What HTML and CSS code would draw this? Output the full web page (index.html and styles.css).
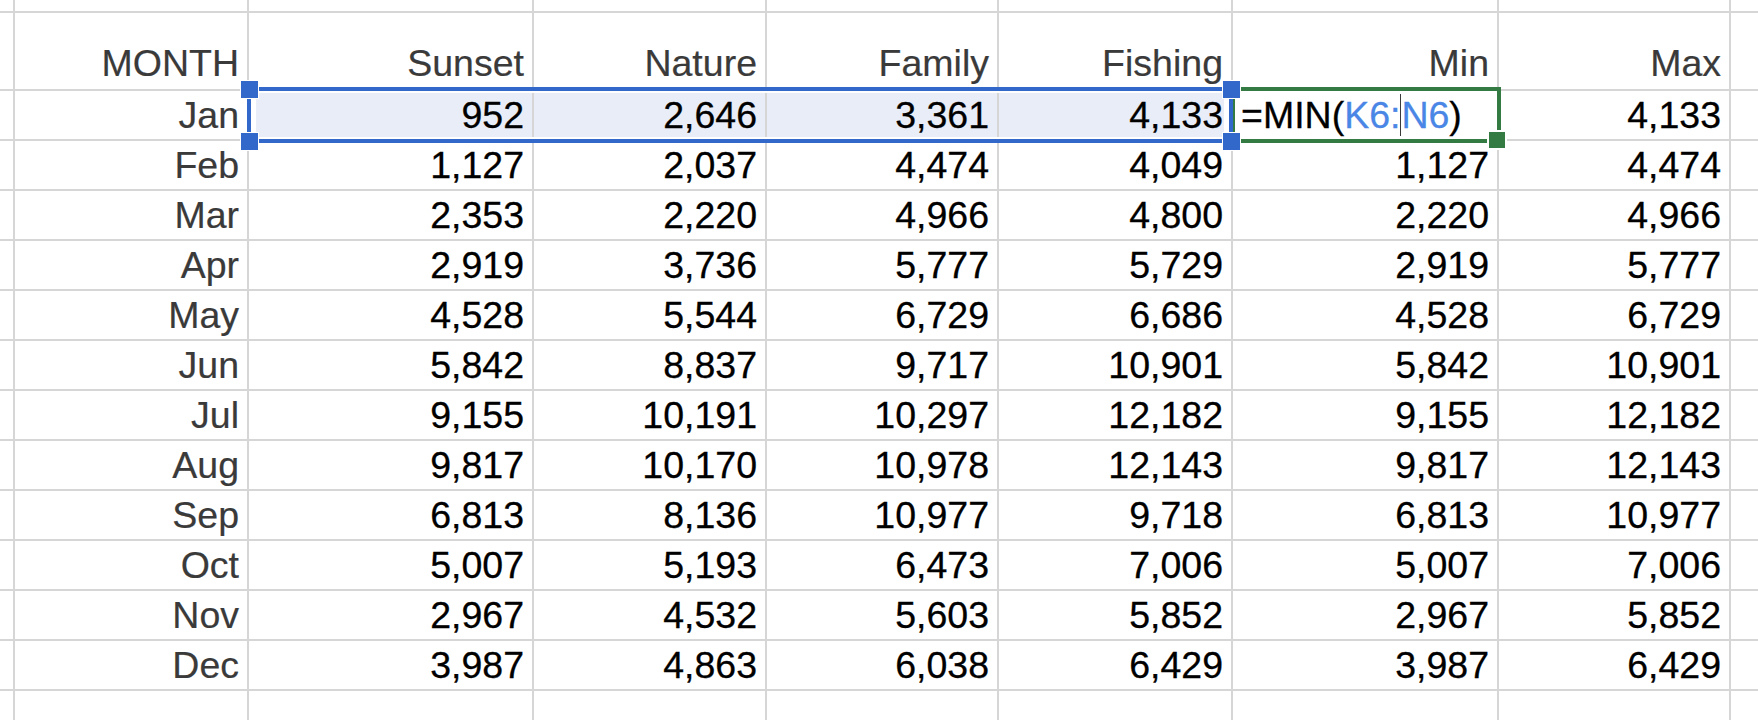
FILE: index.html
```html
<!DOCTYPE html>
<html lang="en">
<head>
<meta charset="utf-8">
<title>Sheet</title>
<link rel="stylesheet" href="styles.css">
</head>
<body>
<div class="sheet">
  <div class="row"><div class="c"></div><div class="c"></div><div class="c"></div><div class="c"></div><div class="c"></div><div class="c"></div><div class="c"></div><div class="c"></div><div class="c"></div></div>
  <div class="row head"><div class="c"></div><div class="c t">MONTH</div><div class="c t">Sunset</div><div class="c t">Nature</div><div class="c t">Family</div><div class="c t">Fishing</div><div class="c t">Min</div><div class="c t">Max</div><div class="c"></div></div>
  <div class="row active">
    <div class="c"></div><div class="c t">Jan</div><div class="c n hl">952</div><div class="c n hl">2,646</div><div class="c n hl">3,361</div><div class="c n hl">4,133</div><div class="c edit">=MIN(<span class="ref">K6:<i class="caret"></i>N6</span>)</div><div class="c n">4,133</div><div class="c"></div>
    <div class="editor"><span class="fill-handle"></span></div>
    <div class="range"><span class="hd tl"></span><span class="hd tr"></span><span class="hd bl"></span><span class="hd br"></span></div>
  </div>
  <div class="row"><div class="c"></div><div class="c t">Feb</div><div class="c n">1,127</div><div class="c n">2,037</div><div class="c n">4,474</div><div class="c n">4,049</div><div class="c n">1,127</div><div class="c n">4,474</div><div class="c"></div></div>
  <div class="row"><div class="c"></div><div class="c t">Mar</div><div class="c n">2,353</div><div class="c n">2,220</div><div class="c n">4,966</div><div class="c n">4,800</div><div class="c n">2,220</div><div class="c n">4,966</div><div class="c"></div></div>
  <div class="row"><div class="c"></div><div class="c t">Apr</div><div class="c n">2,919</div><div class="c n">3,736</div><div class="c n">5,777</div><div class="c n">5,729</div><div class="c n">2,919</div><div class="c n">5,777</div><div class="c"></div></div>
  <div class="row"><div class="c"></div><div class="c t">May</div><div class="c n">4,528</div><div class="c n">5,544</div><div class="c n">6,729</div><div class="c n">6,686</div><div class="c n">4,528</div><div class="c n">6,729</div><div class="c"></div></div>
  <div class="row"><div class="c"></div><div class="c t">Jun</div><div class="c n">5,842</div><div class="c n">8,837</div><div class="c n">9,717</div><div class="c n">10,901</div><div class="c n">5,842</div><div class="c n">10,901</div><div class="c"></div></div>
  <div class="row"><div class="c"></div><div class="c t">Jul</div><div class="c n">9,155</div><div class="c n">10,191</div><div class="c n">10,297</div><div class="c n">12,182</div><div class="c n">9,155</div><div class="c n">12,182</div><div class="c"></div></div>
  <div class="row"><div class="c"></div><div class="c t">Aug</div><div class="c n">9,817</div><div class="c n">10,170</div><div class="c n">10,978</div><div class="c n">12,143</div><div class="c n">9,817</div><div class="c n">12,143</div><div class="c"></div></div>
  <div class="row"><div class="c"></div><div class="c t">Sep</div><div class="c n">6,813</div><div class="c n">8,136</div><div class="c n">10,977</div><div class="c n">9,718</div><div class="c n">6,813</div><div class="c n">10,977</div><div class="c"></div></div>
  <div class="row"><div class="c"></div><div class="c t">Oct</div><div class="c n">5,007</div><div class="c n">5,193</div><div class="c n">6,473</div><div class="c n">7,006</div><div class="c n">5,007</div><div class="c n">7,006</div><div class="c"></div></div>
  <div class="row"><div class="c"></div><div class="c t">Nov</div><div class="c n">2,967</div><div class="c n">4,532</div><div class="c n">5,603</div><div class="c n">5,852</div><div class="c n">2,967</div><div class="c n">5,852</div><div class="c"></div></div>
  <div class="row"><div class="c"></div><div class="c t">Dec</div><div class="c n">3,987</div><div class="c n">4,863</div><div class="c n">6,038</div><div class="c n">6,429</div><div class="c n">3,987</div><div class="c n">6,429</div><div class="c"></div></div>
  <div class="row"><div class="c"></div><div class="c"></div><div class="c"></div><div class="c"></div><div class="c"></div><div class="c"></div><div class="c"></div><div class="c"></div><div class="c"></div></div>
</div>
</body>
</html>
```

FILE: styles.css
```css
* {
  box-sizing: border-box;
  margin: 0;
  padding: 0;
}

html, body {
  background: #ffffff;
  overflow: hidden;
}

body {
  width: 1758px;
  height: 720px;
  font-family: "Liberation Sans", Arial, sans-serif;
  font-size: 37.5px;
}

.sheet {
  display: grid;
  grid-template-rows: 11px 76px repeat(13, 48px);
  row-gap: 2px;
  background: #d6d6d6;
  height: 720px;
  overflow: hidden;
}

.row {
  display: grid;
  grid-template-columns: 13px 232px 283px 231px 230px 232px 264px 230px 1fr;
  column-gap: 2px;
  position: relative;
}

.active {
  z-index: 1;
}

.c {
  background: #ffffff;
  display: flex;
  align-items: flex-end;
  justify-content: flex-end;
  line-height: 42px;
  white-space: nowrap;
  color: #000000;
  -webkit-text-stroke: 0.3px currentColor;
}

.t,
.n {
  padding: 0 8px 3px 8px;
}

.t {
  color: #3a3a3a;
  -webkit-text-stroke: 0.2px currentColor;
}

.head .t {
  padding-bottom: 5px;
}

.hl {
  background: #e8edf8;
}

.edit {
  justify-content: flex-start;
  padding: 0 8px 3px 8px;
  color: #000000;
}

.ref {
  color: #4a86e6;
}

.caret {
  display: inline-block;
  width: 0;
  height: 42px;
  vertical-align: top;
  border-left: 1.5px solid #3a3a3a;
}

.range {
  position: absolute;
  grid-column: 3 / 7;
  grid-row: 1 / 2;
  inset: -4px -2px -4px -2px;
  border: 4px solid #3168c9;
  box-shadow: inset 5px 0 0 #ffffff, inset -5px 0 0 #ffffff, inset 0 2px 0 #ffffff, inset 0 -2px 0 #ffffff;
  z-index: 3;
}

.hd {
  position: absolute;
  width: 19px;
  height: 19px;
  background: #3168c9;
  border: 1.5px solid #ffffff;
}

.tl { left: -11.5px; top: -11.5px; }
.tr { right: -11.5px; top: -11.5px; }
.bl { left: -11.5px; bottom: -11.5px; }
.br { right: -11.5px; bottom: -11.5px; }

.editor {
  position: absolute;
  grid-column: 7 / 8;
  grid-row: 1 / 2;
  inset: -4px -4px -4px -2px;
  border: 4px solid #347b43;
  z-index: 2;
}

.fill-handle {
  position: absolute;
  right: -10px;
  bottom: -11px;
  width: 20px;
  height: 20px;
  background: #347b43;
  border: 2px solid #ffffff;
}
```
